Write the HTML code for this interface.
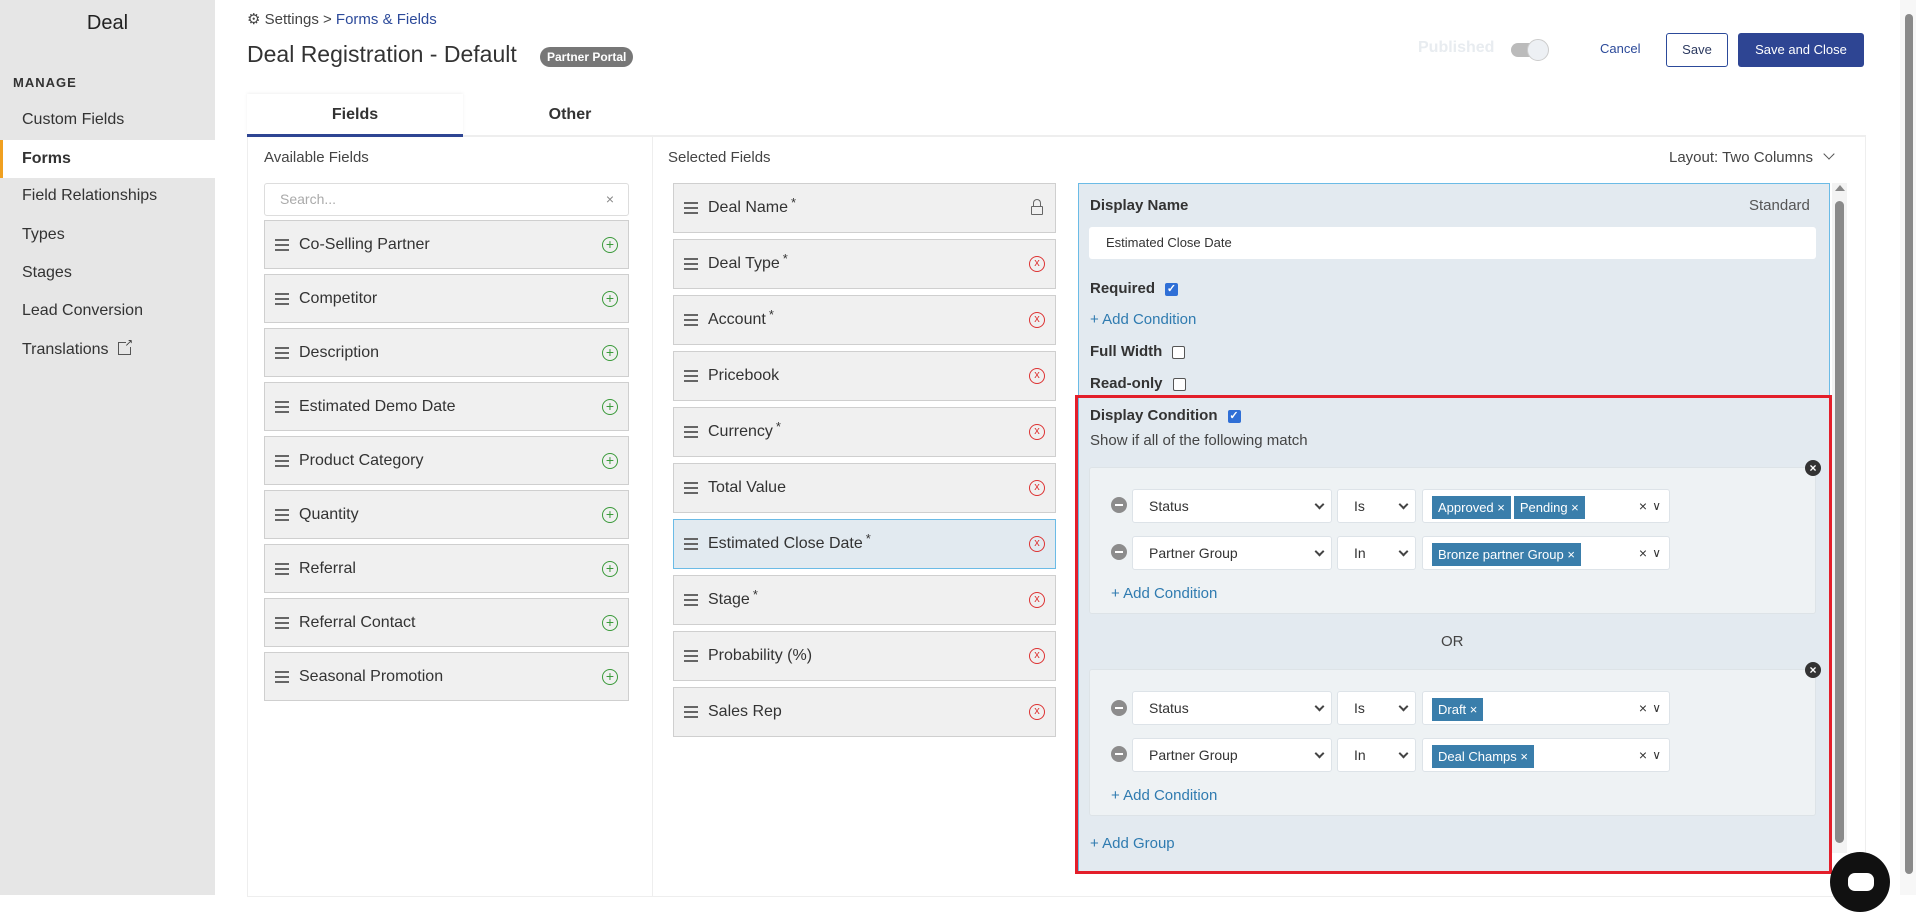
<!DOCTYPE html>
<html><head><meta charset="utf-8"><style>
*{box-sizing:border-box;margin:0;padding:0}
body{width:1916px;height:895px;overflow:hidden;background:#fff;font-family:"Liberation Sans",sans-serif;color:#333;position:relative}
.a{position:absolute}
.side{left:0;top:0;width:215px;height:895px;background:#e6e6e6}
.side .it{position:absolute;left:0;width:215px;height:38px;line-height:38px;padding-left:22px;font-size:16px;color:#333}
.fld{position:absolute;background:#f0f0f0;border:1px solid #cfcfcf;font-size:16px;color:#333}
.ham{position:absolute;left:10px;top:50%;margin-top:-6px;width:14px;height:12px;border-top:2px solid #666;border-bottom:2px solid #666}
.ham:after{content:"";position:absolute;left:0;top:3px;width:14px;height:2px;background:#666}
.lbl{position:absolute;left:34px;top:50%;transform:translateY(-50%)}
.plus{position:absolute;right:10px;top:50%;margin-top:-8px;width:16px;height:16px;border:1.5px solid #3a9a3a;border-radius:50%;color:#3a9a3a;font-size:14px;line-height:13px;text-align:center}
.rm{position:absolute;right:10px;top:50%;margin-top:-8px;width:16px;height:16px;border:1.5px solid #d33;border-radius:50%;color:#d33;font-size:11px;line-height:13px;text-align:center}
.star{font-size:13px;vertical-align:top;position:relative;top:-4px;margin-left:3px}
.sel{position:absolute;background:#fff;border:1px solid #dde3e8;border-radius:3px;height:34px;font-size:14px;line-height:32px;padding-left:16px;color:#333}
.sel .chev{position:absolute;right:8px;top:11px;width:7px;height:7px;border-right:2px solid #444;border-bottom:2px solid #444;transform:rotate(45deg)}
.tag{display:inline-block;background:#3a7eab;color:#fff;font-size:13px;height:23px;line-height:23px;padding:0 6px;margin-right:3px;vertical-align:middle}
.minus{position:absolute;width:16px;height:16px;border-radius:50%;background:#8c8c8c}
.minus:after{content:"";position:absolute;left:4px;top:7px;width:8px;height:2px;background:#fff}
.link{color:#2f7bb0;font-size:15px}
.xc{position:absolute;width:16px;height:16px;border-radius:50%;background:#333;color:#fff;font-size:12px;line-height:16px;text-align:center;font-weight:bold}
.cb{display:inline-block;width:13px;height:13px;border-radius:2px;vertical-align:middle;margin-left:10px}
.cbon{background:#2f6fd6;color:#fff;font-size:11px;line-height:13px;text-align:center}
.cboff{border:1.5px solid #555;background:#fff}
.b{font-weight:bold;font-size:15px;color:#333}
</style></head><body>
<div class="a side">
 <div class="a" style="left:0;width:215px;top:12px;text-align:center;font-size:20px;color:#222">Deal</div>
 <div class="a" style="left:13px;top:75px;font-size:13px;font-weight:bold;letter-spacing:1px;color:#333">MANAGE</div>
 <div class="it" style="top:101px">Custom Fields</div>
 <div class="it" style="top:140px;background:#fff;font-weight:bold;border-left:3px solid #f0a020;padding-left:19px">Forms</div>
 <div class="it" style="top:177px">Field Relationships</div>
 <div class="it" style="top:216px">Types</div>
 <div class="it" style="top:254px">Stages</div>
 <div class="it" style="top:292px">Lead Conversion</div>
 <div class="it" style="top:331px">Translations <span style="display:inline-block;width:13px;height:13px;border:1.5px solid #555;vertical-align:-1px;margin-left:5px;position:relative"><span style="position:absolute;right:-4px;top:-4px;width:8px;height:8px;background:#e6e6e6"></span><span style="position:absolute;right:-3px;top:-3px;font-size:10px;line-height:8px">↗</span></span></div>
</div>
<div class="a" style="left:247px;top:10px;font-size:15px;color:#444">⚙ Settings &gt; <span style="color:#2c4a9a">Forms &amp; Fields</span></div>
<div class="a" style="left:247px;top:41px;font-size:23px;color:#333">Deal Registration - Default</div>
<div class="a" style="left:540px;top:47px;height:20px;line-height:20px;padding:0 7px;border-radius:10px;background:#777;color:#fff;font-size:12px;font-weight:bold">Partner Portal</div>
<div class="a" style="left:1418px;top:39px;font-size:16px;color:#e8ecf0;font-weight:bold">Published</div>
<div class="a" style="left:1511px;top:43px;width:28px;height:14px;border-radius:7px;background:#bbb"></div>
<div class="a" style="left:1527px;top:39px;width:22px;height:22px;border-radius:50%;background:#edf0f4;border:1px solid #ccc"></div>
<div class="a" style="left:1600px;top:41px;font-size:13px;color:#2c4a9a">Cancel</div>
<div class="a" style="left:1666px;top:33px;width:62px;height:34px;border:1px solid #2c4a9a;border-radius:3px;text-align:center;line-height:32px;font-size:13px;color:#2c3a60">Save</div>
<div class="a" style="left:1738px;top:33px;width:126px;height:34px;background:#2e4593;border-radius:3px;text-align:center;line-height:34px;font-size:13px;color:#fff">Save and Close</div>
<!-- tabs -->
<div class="a" style="left:247px;top:94px;width:216px;height:43px;background:#fff;box-shadow:0 -1px 3px rgba(0,0,0,.06);border-bottom:3px solid #2e4593;text-align:center;line-height:42px;font-weight:bold;font-size:16px">Fields</div>
<div class="a" style="left:463px;top:94px;width:214px;height:43px;text-align:center;line-height:42px;font-weight:bold;font-size:16px">Other</div>
<div class="a" style="left:463px;top:135px;width:1403px;height:2px;background:#eee"></div>
<div class="a" style="left:247px;top:137px;width:1619px;height:760px;border:1px solid #eee;border-top:none"></div>
<div class="a" style="left:652px;top:137px;width:1px;height:760px;background:#eee"></div>
<div class="a" style="left:264px;top:149px;font-size:15px;color:#444">Available Fields</div>
<div class="a" style="left:264px;top:183px;width:365px;height:33px;border:1px solid #ddd;border-radius:3px;font-size:14px;color:#aaa;line-height:31px;padding-left:15px">Search...<span style="position:absolute;right:14px;color:#888">×</span></div>
<div class="fld" style="left:264px;top:220px;width:365px;height:49px"><div class="ham"></div><div class="lbl">Co-Selling Partner</div><div class="plus">+</div></div>
<div class="fld" style="left:264px;top:274px;width:365px;height:49px"><div class="ham"></div><div class="lbl">Competitor</div><div class="plus">+</div></div>
<div class="fld" style="left:264px;top:328px;width:365px;height:49px"><div class="ham"></div><div class="lbl">Description</div><div class="plus">+</div></div>
<div class="fld" style="left:264px;top:382px;width:365px;height:49px"><div class="ham"></div><div class="lbl">Estimated Demo Date</div><div class="plus">+</div></div>
<div class="fld" style="left:264px;top:436px;width:365px;height:49px"><div class="ham"></div><div class="lbl">Product Category</div><div class="plus">+</div></div>
<div class="fld" style="left:264px;top:490px;width:365px;height:49px"><div class="ham"></div><div class="lbl">Quantity</div><div class="plus">+</div></div>
<div class="fld" style="left:264px;top:544px;width:365px;height:49px"><div class="ham"></div><div class="lbl">Referral</div><div class="plus">+</div></div>
<div class="fld" style="left:264px;top:598px;width:365px;height:49px"><div class="ham"></div><div class="lbl">Referral Contact</div><div class="plus">+</div></div>
<div class="fld" style="left:264px;top:652px;width:365px;height:49px"><div class="ham"></div><div class="lbl">Seasonal Promotion</div><div class="plus">+</div></div>
<div class="a" style="left:668px;top:149px;font-size:15px;color:#444">Selected Fields</div>
<div class="a" style="left:1669px;top:149px;font-size:15px;color:#444">Layout: Two Columns <span style="display:inline-block;width:8px;height:8px;border-right:1.5px solid #555;border-bottom:1.5px solid #555;transform:rotate(45deg);margin:0 0 4px 8px"></span></div>
<div class="fld" style="left:673px;top:183px;width:383px;height:50px"><div class="ham"></div><div class="lbl">Deal Name<span class="star">*</span></div><div class="a" style="right:12px;top:18px;width:12px;height:9px;border:1.5px solid #666;border-radius:1px;top:22px"></div><div class="a" style="right:14px;top:15px;width:8px;height:8px;border:1.5px solid #666;border-bottom:none;border-radius:4px 4px 0 0"></div></div>
<div class="fld" style="left:673px;top:239px;width:383px;height:50px"><div class="ham"></div><div class="lbl">Deal Type<span class="star">*</span></div><div class="rm">x</div></div>
<div class="fld" style="left:673px;top:295px;width:383px;height:50px"><div class="ham"></div><div class="lbl">Account<span class="star">*</span></div><div class="rm">x</div></div>
<div class="fld" style="left:673px;top:351px;width:383px;height:50px"><div class="ham"></div><div class="lbl">Pricebook</div><div class="rm">x</div></div>
<div class="fld" style="left:673px;top:407px;width:383px;height:50px"><div class="ham"></div><div class="lbl">Currency<span class="star">*</span></div><div class="rm">x</div></div>
<div class="fld" style="left:673px;top:463px;width:383px;height:50px"><div class="ham"></div><div class="lbl">Total Value</div><div class="rm">x</div></div>
<div class="fld" style="left:673px;top:519px;width:383px;height:50px;background:#e2eaf0;border-color:#6bbbe6"><div class="ham"></div><div class="lbl">Estimated Close Date<span class="star">*</span></div><div class="rm">x</div></div>
<div class="fld" style="left:673px;top:575px;width:383px;height:50px"><div class="ham"></div><div class="lbl">Stage<span class="star">*</span></div><div class="rm">x</div></div>
<div class="fld" style="left:673px;top:631px;width:383px;height:50px"><div class="ham"></div><div class="lbl">Probability (%)</div><div class="rm">x</div></div>
<div class="fld" style="left:673px;top:687px;width:383px;height:50px"><div class="ham"></div><div class="lbl">Sales Rep</div><div class="rm">x</div></div>
<!-- right panel -->
<div class="a" style="left:1078px;top:183px;width:752px;height:690px;background:#e3eaf0;border-top:1px solid #6bbbe6;border-left:1px solid #6bbbe6;border-right:1px solid #6bbbe6"></div>
<div class="a b" style="left:1090px;top:197px">Display Name</div>
<div class="a" style="left:1749px;top:197px;font-size:15px;color:#555">Standard</div>
<div class="a" style="left:1089px;top:227px;width:727px;height:32px;background:#fff;border-radius:3px;font-size:13px;line-height:32px;padding-left:17px;color:#333">Estimated Close Date</div>
<div class="a b" style="left:1090px;top:280px">Required<span class="cb cbon">✓</span></div>
<div class="a link" style="left:1090px;top:311px">+ Add Condition</div>
<div class="a b" style="left:1090px;top:343px">Full Width<span class="cb cboff"></span></div>
<div class="a b" style="left:1090px;top:375px">Read-only<span class="cb cboff"></span></div>
<div class="a" style="left:1075px;top:395px;width:757px;height:479px;border:3px solid #e31e2a"></div>
<div class="a b" style="left:1090px;top:407px">Display Condition<span class="cb cbon">✓</span></div>
<div class="a" style="left:1090px;top:432px;font-size:15px;color:#444">Show if all of the following match</div>
<!-- group 1 -->
<div class="a" style="left:1089px;top:467px;width:727px;height:147px;background:#eef2f4;border:1px solid #dde3e7;border-radius:3px"></div>
<div class="xc" style="left:1805px;top:460px">×</div>
<div class="minus" style="left:1111px;top:497px"></div>
<div class="sel" style="left:1132px;top:489px;width:200px">Status<span class="chev"></span></div>
<div class="sel" style="left:1337px;top:489px;width:79px">Is<span class="chev"></span></div>
<div class="sel" style="left:1422px;top:489px;width:248px;padding-left:9px;line-height:32px"><span class="tag">Approved ×</span><span class="tag">Pending ×</span><span class="a" style="right:22px;top:0">×</span><span class="a" style="right:8px;top:0;font-size:12px">∨</span></div>
<div class="minus" style="left:1111px;top:544px"></div>
<div class="sel" style="left:1132px;top:536px;width:200px">Partner Group<span class="chev"></span></div>
<div class="sel" style="left:1337px;top:536px;width:79px">In<span class="chev"></span></div>
<div class="sel" style="left:1422px;top:536px;width:248px;padding-left:9px"><span class="tag">Bronze partner Group ×</span><span class="a" style="right:22px;top:0">×</span><span class="a" style="right:8px;top:0;font-size:12px">∨</span></div>
<div class="a link" style="left:1111px;top:585px">+ Add Condition</div>
<div class="a" style="left:1441px;top:633px;font-size:15px;color:#444">OR</div>
<!-- group 2 -->
<div class="a" style="left:1089px;top:669px;width:727px;height:147px;background:#eef2f4;border:1px solid #dde3e7;border-radius:3px"></div>
<div class="xc" style="left:1805px;top:662px">×</div>
<div class="minus" style="left:1111px;top:700px"></div>
<div class="sel" style="left:1132px;top:691px;width:200px">Status<span class="chev"></span></div>
<div class="sel" style="left:1337px;top:691px;width:79px">Is<span class="chev"></span></div>
<div class="sel" style="left:1422px;top:691px;width:248px;padding-left:9px"><span class="tag">Draft ×</span><span class="a" style="right:22px;top:0">×</span><span class="a" style="right:8px;top:0;font-size:12px">∨</span></div>
<div class="minus" style="left:1111px;top:746px"></div>
<div class="sel" style="left:1132px;top:738px;width:200px">Partner Group<span class="chev"></span></div>
<div class="sel" style="left:1337px;top:738px;width:79px">In<span class="chev"></span></div>
<div class="sel" style="left:1422px;top:738px;width:248px;padding-left:9px"><span class="tag">Deal Champs ×</span><span class="a" style="right:22px;top:0">×</span><span class="a" style="right:8px;top:0;font-size:12px">∨</span></div>
<div class="a link" style="left:1111px;top:787px">+ Add Condition</div>
<div class="a link" style="left:1090px;top:835px">+ Add Group</div>
<!-- scrollbars -->
<div class="a" style="left:1832px;top:183px;width:15px;height:670px;background:#f3f3f3"></div>
<div class="a" style="left:1835px;top:185px;width:0;height:0;border-left:5px solid transparent;border-right:5px solid transparent;border-bottom:6px solid #888"></div>
<div class="a" style="left:1835px;top:201px;width:9px;height:642px;border-radius:5px;background:#8a8a8a"></div>
<div class="a" style="left:1900px;top:0;width:16px;height:895px;background:#f7f7f7"></div>
<div class="a" style="left:1905px;top:14px;width:8px;height:860px;border-radius:4px;background:#8a8a8a"></div>
<div class="a" style="left:1830px;top:852px;width:60px;height:60px;border-radius:50%;background:#111"></div>
<div class="a" style="left:1848px;top:873px;width:26px;height:18px;border-radius:7px;background:#fff"></div>
</body></html>
